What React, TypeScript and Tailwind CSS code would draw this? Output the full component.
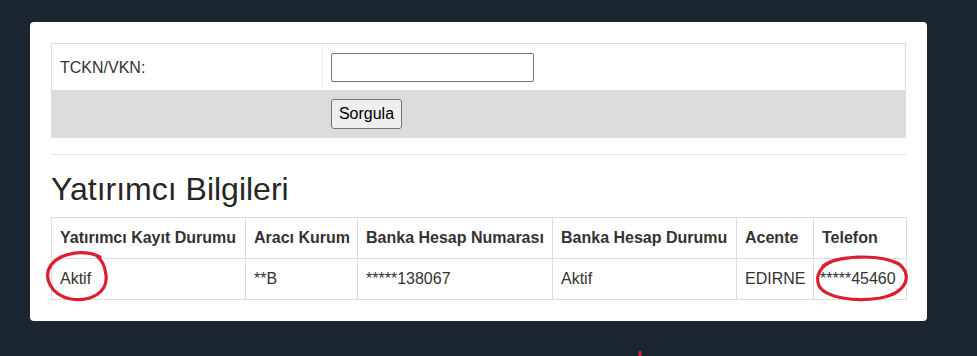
import React from "react";

const font = { fontFamily: '"Liberation Sans", Arial, Helvetica, sans-serif' };

export default function App() {
  const headers = [
    "Yatırımcı Kayıt Durumu",
    "Aracı Kurum",
    "Banka Hesap Numarası",
    "Banka Hesap Durumu",
    "Acente",
    "Telefon",
  ];
  const values = ["Aktif", "**B", "*****138067", "Aktif", "EDIRNE", "*****45460"];
  const widths = ["w-[194px]", "w-[112px]", "w-[195px]", "w-[184px]", "w-[77px]", "w-[93px]"];

  return (
    <div className="relative w-[977px] h-[356px] bg-[#1b2631] overflow-hidden pt-[22px] pl-[30px]" style={font}>
      <div className="w-[897px] bg-white rounded-[4px] p-[21px] text-[#333] text-[16px]">
        {/* Form table */}
        <div>
          <div className="flex h-[47px] border border-b-0 border-[#dddddd]">
            <div className="w-[271px] border-r border-[#eeeeee] flex items-center pl-[8px] pt-[2px]">TCKN/VKN:</div>
            <div className="flex items-center pl-[8px] pt-[1px]">
              <input
                type="text"
                className="w-[203px] h-[29px] border border-[#767676] rounded-[2px] bg-white outline-none px-1"
              />
            </div>
          </div>
          <div className="flex items-center h-[48px] bg-[#dcdcdc] pl-[280px]">
            <button
              className="w-[71px] h-[30px] bg-[#efefef] border border-[#767676] rounded-[3px] text-[16px] text-black leading-none"
              style={font}
            >
              Sorgula
            </button>
          </div>
        </div>

        <div className="mt-[16px] border-t border-[#e5e5e5]" />

        <h2 className="mt-[17px] text-[32px] leading-[1.1] font-normal text-[#262626]">Yatırımcı Bilgileri</h2>

        <table className="mt-[10px] w-full table-fixed border-collapse">
          <colgroup>
            {widths.map((w, i) => (
              <col key={i} className={w} />
            ))}
          </colgroup>
          <thead>
            <tr>
              {headers.map((h) => (
                <th
                  key={h}
                  className="border border-[#dddddd] text-left font-bold px-[8px] py-[9px] leading-[22px] whitespace-nowrap"
                >
                  {h}
                </th>
              ))}
            </tr>
          </thead>
          <tbody>
            <tr>
              {values.map((v, i) => (
                <td
                  key={i}
                  className={`border border-[#dddddd] text-left px-[8px] py-[9px] leading-[22px] whitespace-nowrap ${
                    i === 5 ? "pl-[6px]" : ""
                  }`}
                >
                  {v}
                </td>
              ))}
            </tr>
          </tbody>
        </table>
      </div>

      {/* Red hand-drawn annotations */}
      <svg className="absolute inset-0 pointer-events-none" width="977" height="356" viewBox="0 0 977 356">
        <path
          d="M 100 257 C 86 250, 62 251, 51 265 C 43 277, 50 295, 71 299 C 92 302, 108 292, 106 275 C 105 266, 102 260, 97 256"
          fill="none"
          stroke="#dc1f30"
          strokeWidth="3.2"
          strokeLinecap="round"
        />
        <path
          d="M 823 266 C 836 256, 878 253, 899 264 C 913 275, 907 293, 880 298 C 855 302, 826 298, 819 286 C 815 276, 820 266, 833 261"
          fill="none"
          stroke="#dc1f30"
          strokeWidth="3.2"
          strokeLinecap="round"
        />
        <path d="M 640 352 L 640 360" fill="none" stroke="#dc1f30" strokeWidth="3" strokeLinecap="round" />
      </svg>
    </div>
  );
}
